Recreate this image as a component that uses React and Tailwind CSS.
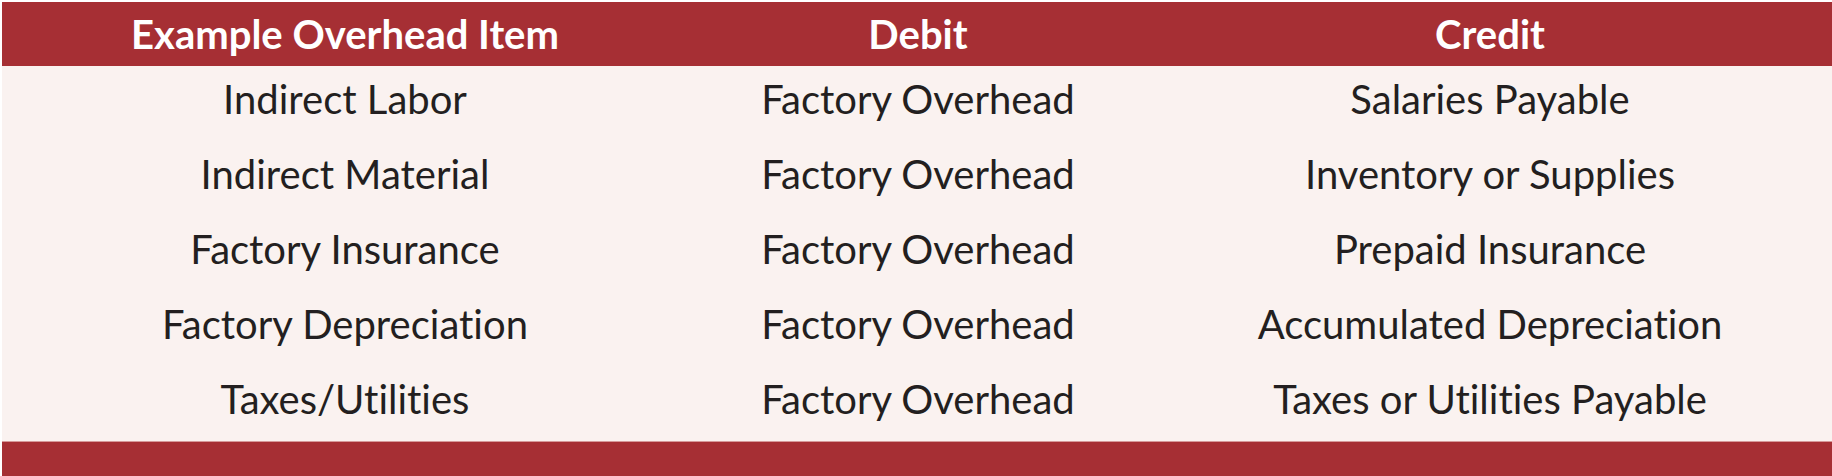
const rows = [
  ['Indirect Labor', 'Factory Overhead', 'Salaries Payable'],
  ['Indirect Material', 'Factory Overhead', 'Inventory or Supplies'],
  ['Factory Insurance', 'Factory Overhead', 'Prepaid Insurance'],
  ['Factory Depreciation', 'Factory Overhead', 'Accumulated Depreciation'],
  ['Taxes/Utilities', 'Factory Overhead', 'Taxes or Utilities Payable'],
]

export default function App() {
  return (
    <div className="w-[1832px] h-[476px] bg-white pt-[2px] pl-[2px] font-['Lato',sans-serif] [font-variant-ligatures:none]">
      <div className="flex flex-col h-full">
        <div className="grid grid-cols-[686px_460px_1fr] h-[64px] bg-[#a62f34] text-white font-bold text-[40px] items-center">
          <div className="text-center">Example Overhead Item</div>
          <div className="text-center">Debit</div>
          <div className="text-center">Credit</div>
        </div>
        <div className="bg-[#faf2f0] text-[#231f20] text-[40px]">
          {rows.map((r) => (
            <div key={r[0]} className="grid grid-cols-[686px_460px_1fr] h-[75px] items-center pb-[9px]">
              <div className="text-center">{r[0]}</div>
              <div className="text-center">{r[1]}</div>
              <div className="text-center">{r[2]}</div>
            </div>
          ))}
        </div>
        <div className="flex-1 bg-[#a62f34] border-t border-[#d69a9a]" />
      </div>
    </div>
  )
}
